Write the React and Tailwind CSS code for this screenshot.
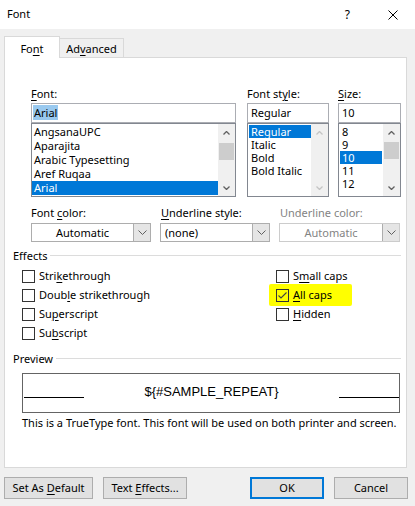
const U = ({ children }) => (
  <span className="underline decoration-1 underline-offset-2">{children}</span>
);

const ArrowUp = ({ color }) => (
  <svg width="7" height="4" viewBox="0 0 7 4">
    <path d="M0.5 3.5L3.5 0.5L6.5 3.5" fill="none" stroke={color} strokeWidth="1.3" />
  </svg>
);

const ArrowDown = ({ color }) => (
  <svg width="7" height="4" viewBox="0 0 7 4">
    <path d="M0.5 0.5L3.5 3.5L6.5 0.5" fill="none" stroke={color} strokeWidth="1.3" />
  </svg>
);

const Scrollbar = ({ disabled, thumbTop }) => {
  const c = disabled ? "#c4c4c4" : "#606060";
  return (
    <div className="w-[17px] h-full bg-[#f0f0f0] flex flex-col shrink-0">
      <div className="h-[17px] flex items-center justify-center">
        <ArrowUp color={c} />
      </div>
      <div className="flex-1">
        {!disabled && <div className={`${thumbTop} mx-[1px] h-[17px] bg-[#cdcdcd]`} />}
      </div>
      <div className="h-[17px] flex items-center justify-center">
        <ArrowDown color={c} />
      </div>
    </div>
  );
};

const Combo = ({ w, text, center, disabled }) => (
  <div
    className={`${w} h-[19px] border bg-white flex ${
      disabled ? "border-[#cccccc] text-[#838383]" : "border-[#adadad]"
    }`}
  >
    <div className={`flex-1 leading-[17px] ${center ? "text-center" : "pl-[4px]"}`}>{text}</div>
    <div className="w-[17px] h-full bg-[#e5e5e5] border-l border-[#adadad] flex items-center justify-center">
      <svg width="9" height="5" viewBox="0 0 9 5">
        <path d="M0.5 0.5L4.5 4.5L8.5 0.5" fill="none" stroke="#606060" strokeWidth="1" />
      </svg>
    </div>
  </div>
);

const Check = ({ checked, children }) => (
  <div className="h-[19px] flex items-start">
    <div className="mt-[3px] w-[13px] h-[13px] border border-[#333333] flex items-center justify-center">
      {checked && (
        <svg width="11" height="11" viewBox="0 0 11 11">
          <path d="M1.5 5.5L4 8L9.5 2.5" fill="none" stroke="#444444" strokeWidth="1.1" />
        </svg>
      )}
    </div>
    <span className="ml-[4px] leading-[18px]">{children}</span>
  </div>
);

const GroupHeader = ({ label, mt }) => (
  <div className={`${mt} pl-[8px] pr-[5px] h-[16px] flex items-center`}>
    <span className="leading-[15px]">{label}</span>
    <div className="flex-1 h-px bg-[#dcdcdc] ml-[3px]" />
  </div>
);

const fonts = ["AngsanaUPC", "Aparajita", "Arabic Typesetting", "Aref Ruqaa", "Arial"];
const styles = ["Regular", "Italic", "Bold", "Bold Italic"];
const sizes = ["8", "9", "10", "11", "12"];

export default function App() {
  return (
    <div className="w-[415px] h-[506px] bg-[#f0f0f0] text-black text-[11px] font-['Noto_Sans',sans-serif] overflow-hidden">
      {/* title bar */}
      <div className="h-[29px] bg-white flex items-center pl-[7px]">
        <span>Font</span>
        <span className="ml-auto text-[12px]">?</span>
        <svg className="ml-[38px] mr-[17px]" width="10" height="10" viewBox="0 0 10 10">
          <path d="M0.5 0.5L9.5 9.5M9.5 0.5L0.5 9.5" stroke="#000" strokeWidth="1" />
        </svg>
      </div>

      {/* tabs */}
      <div className="mt-[7px] pl-[4px] flex items-end relative z-10 -mb-px">
        <div className="w-[56px] h-[22px] bg-white border border-b-0 border-[#d9d9d9] text-center pt-[4px] leading-[16px]">
          Fo<U>n</U>t
        </div>
        <div className="w-[64px] h-[20px] bg-[#f0f0f0] border border-l-0 border-[#d9d9d9] text-center pt-[2px] leading-[16px]">
          Ad<U>v</U>anced
        </div>
      </div>

      {/* panel */}
      <div className="ml-[4px] w-[403px] h-[411px] border border-[#d9d9d9] bg-white">
        {/* font / style / size */}
        <div className="mt-[28px] pl-[26px] flex">
          <div className="w-[205px] mr-[11px]">
            <div className="h-[17px] leading-[16px]">
              <U>F</U>ont:
            </div>
            <div className="h-[20px] border border-[#abadb3] pl-[1px] leading-[18px]">
              <span className="bg-[#99c9ef] px-[1px]">Arial</span>
            </div>
            <div className="h-[74px] border border-[#828790] flex">
              <div className="flex-1 pt-[1px]">
                {fonts.map((f) => (
                  <div
                    key={f}
                    className={`h-[14px] leading-[14px] pl-[2px] ${f === "Arial" ? "bg-[#0078d7] text-white" : ""}`}
                  >
                    {f}
                  </div>
                ))}
              </div>
              <Scrollbar thumbTop="mt-[2px]" />
            </div>
          </div>

          <div className="w-[82px] mr-[9px]">
            <div className="h-[17px] leading-[16px]">
              Font st<U>y</U>le:
            </div>
            <div className="h-[20px] border border-[#abadb3] pl-[3px] leading-[18px]">Regular</div>
            <div className="h-[74px] border border-[#828790] flex">
              <div className="flex-1 pt-[1px] pl-[1px]">
                {styles.map((s) => (
                  <div
                    key={s}
                    className={`h-[13px] leading-[13px] pl-[2px] ${s === "Regular" ? "bg-[#0078d7] text-white" : ""}`}
                  >
                    {s}
                  </div>
                ))}
              </div>
              <Scrollbar disabled />
            </div>
          </div>

          <div className="w-[63px]">
            <div className="h-[17px] leading-[16px]">
              <U>S</U>ize:
            </div>
            <div className="h-[20px] border border-[#abadb3] pl-[3px] leading-[18px]">10</div>
            <div className="h-[74px] border border-[#828790] flex">
              <div className="flex-1 pt-[1px] px-[1px]">
                {sizes.map((s) => (
                  <div
                    key={s}
                    className={`h-[13px] leading-[13px] pl-[2px] ${s === "10" ? "bg-[#0078d7] text-white" : ""}`}
                  >
                    {s}
                  </div>
                ))}
              </div>
              <Scrollbar thumbTop="mt-[1px]" />
            </div>
          </div>
        </div>

        {/* color / underline */}
        <div className="mt-[8px] pl-[26px] flex">
          <div className="w-[120px] mr-[9px]">
            <div className="h-[18px] leading-[16px]">
              Font <U>c</U>olor:
            </div>
            <Combo w="w-[120px]" text="Automatic" center />
          </div>
          <div className="w-[110px] mr-[9px]">
            <div className="h-[18px] leading-[16px] pl-[1px]">
              <U>U</U>nderline style:
            </div>
            <Combo w="w-[110px]" text="(none)" />
          </div>
          <div className="w-[121px]">
            <div className="h-[18px] leading-[16px] pl-[1px] text-[#838383]">Underline color:</div>
            <Combo w="w-[121px]" text="Automatic" center disabled />
          </div>
        </div>

        {/* effects */}
        <GroupHeader label="Effects" mt="mt-[5px]" />
        <div className="mt-[4px] pl-[17px] flex">
          <div className="w-[254px]">
            <Check>
              Stri<U>k</U>ethrough
            </Check>
            <Check>
              Doub<U>l</U>e strikethrough
            </Check>
            <Check>
              Su<U>p</U>erscript
            </Check>
            <Check>
              Su<U>b</U>script
            </Check>
          </div>
          <div>
            <Check>
              S<U>m</U>all caps
            </Check>
            <div className="relative">
              <div className="absolute left-[-7px] top-[-2px] w-[83px] h-[22px] bg-[#ffff00] rounded-[2px]" />
              <div className="relative">
                <Check checked>
                  <U>A</U>ll caps
                </Check>
              </div>
            </div>
            <Check>
              <U>H</U>idden
            </Check>
          </div>
        </div>

        {/* preview */}
        <GroupHeader label="Preview" mt="mt-[7px]" />
        <div className="mt-[7px] ml-[17px] w-[378px] h-[40px] border border-[#646464] flex">
          <div className="w-[60px] h-px bg-black mt-[23px] ml-[1px]" />
          <div className="flex-1 text-center mt-[10px] leading-[16px] text-[13px] font-['Liberation_Sans',Arial,sans-serif]">
            {"${#SAMPLE_REPEAT}"}
          </div>
          <div className="w-[60px] h-px bg-black mt-[23px]" />
        </div>
        <div className="mt-[2px] ml-[17px] leading-[15px]">
          This is a TrueType font. This font will be used on both printer and screen.
        </div>
      </div>

      {/* buttons */}
      <div className="mt-[9px] flex h-[22px]">
        <button className="ml-[4px] w-[89px] h-full bg-[#e1e1e1] border border-[#adadad]">
          Set As <U>D</U>efault
        </button>
        <button className="ml-[10px] w-[84px] h-full bg-[#e1e1e1] border border-[#adadad]">
          Text <U>E</U>ffects...
        </button>
        <button className="ml-[63px] w-[74px] h-full bg-[#e1e1e1] border-2 border-[#0078d7]">OK</button>
        <button className="ml-[10px] w-[74px] h-full bg-[#e1e1e1] border border-[#adadad]">Cancel</button>
      </div>
    </div>
  );
}
